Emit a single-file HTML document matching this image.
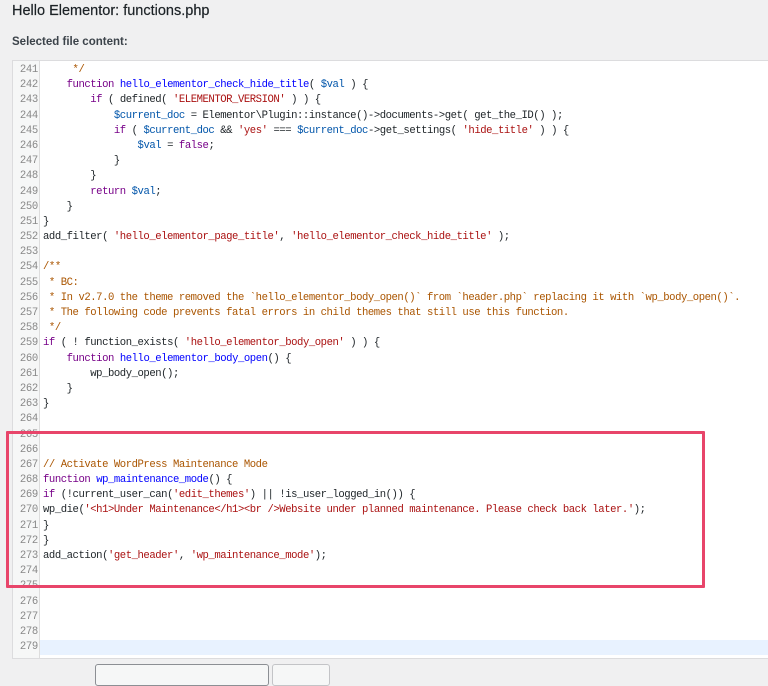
<!DOCTYPE html>
<html><head><meta charset="utf-8"><style>
body{margin:0;width:768px;height:670px;background:#f0f0f1;overflow:hidden;font-family:"Liberation Sans",sans-serif;color:#1d2327;position:relative}
h1{position:absolute;left:12px;top:3px;margin:0;font-size:14.5px;font-weight:normal;color:#1d2327;-webkit-text-stroke:0.2px #1d2327}
.lab{position:absolute;left:12px;top:36px;font-size:11.5px;font-weight:bold;color:#3c434a}
.ed{position:absolute;left:12px;top:60px;width:760px;height:597px;background:#fff;border:1px solid #dcdcde;overflow:hidden}
.gut{position:absolute;left:0;top:0;width:26px;height:100%;background:#f6f7f7;border-right:1px solid #ddd}
.lines{position:absolute;left:0;top:2px;width:760px;font-family:"Liberation Mono",monospace;font-size:10.6px;letter-spacing:-0.45px;line-height:15.2px}
.l{height:15.2px;white-space:pre;position:relative}
.n{display:inline-block;width:25px;text-align:right;color:#888;margin-right:5px;letter-spacing:-0.3px}
.act{background:#e8f2ff}
.k{color:#708}.d{color:#00f}.v{color:#05a}.s{color:#a11}.c{color:#a50}.t{color:#000}
.red{position:absolute;left:6px;top:431px;width:693px;height:151px;border:3.5px solid #e8456a;border-radius:1px}
.btn1{position:absolute;left:95px;top:664px;width:172px;height:20px;border:1px solid #8c8f94;background:#f6f7f7;border-radius:3px}
.btn2{position:absolute;left:272px;top:664px;width:56px;height:20px;border:1px solid #c3c4c7;background:#f6f7f7;border-radius:3px}
</style></head><body>
<h1>Hello Elementor: functions.php</h1>
<div class="lab">Selected file content:</div>
<div class="ed"><div class="gut"></div>
<div class="lines">
<div class="l"><span class="n">241</span><span class="c">     */</span></div>
<div class="l"><span class="n">242</span>    <span class="k">function</span> <span class="d">hello_elementor_check_hide_title</span>( <span class="v">$val</span> ) {</div>
<div class="l"><span class="n">243</span>        <span class="k">if</span> ( defined( <span class="s">'ELEMENTOR_VERSION'</span> ) ) {</div>
<div class="l"><span class="n">244</span>            <span class="v">$current_doc</span> = Elementor\Plugin::instance()-&gt;documents-&gt;get( get_the_ID() );</div>
<div class="l"><span class="n">245</span>            <span class="k">if</span> ( <span class="v">$current_doc</span> &amp;&amp; <span class="s">'yes'</span> === <span class="v">$current_doc</span>-&gt;get_settings( <span class="s">'hide_title'</span> ) ) {</div>
<div class="l"><span class="n">246</span>                <span class="v">$val</span> = <span class="k">false</span>;</div>
<div class="l"><span class="n">247</span>            }</div>
<div class="l"><span class="n">248</span>        }</div>
<div class="l"><span class="n">249</span>        <span class="k">return</span> <span class="v">$val</span>;</div>
<div class="l"><span class="n">250</span>    }</div>
<div class="l"><span class="n">251</span>}</div>
<div class="l"><span class="n">252</span>add_filter( <span class="s">'hello_elementor_page_title'</span>, <span class="s">'hello_elementor_check_hide_title'</span> );</div>
<div class="l"><span class="n">253</span></div>
<div class="l"><span class="n">254</span><span class="c">/**</span></div>
<div class="l"><span class="n">255</span><span class="c"> * BC:</span></div>
<div class="l"><span class="n">256</span><span class="c"> * In v2.7.0 the theme removed the `hello_elementor_body_open()` from `header.php` replacing it with `wp_body_open()`.</span></div>
<div class="l"><span class="n">257</span><span class="c"> * The following code prevents fatal errors in child themes that still use this function.</span></div>
<div class="l"><span class="n">258</span><span class="c"> */</span></div>
<div class="l"><span class="n">259</span><span class="k">if</span> ( ! function_exists( <span class="s">'hello_elementor_body_open'</span> ) ) {</div>
<div class="l"><span class="n">260</span>    <span class="k">function</span> <span class="d">hello_elementor_body_open</span>() {</div>
<div class="l"><span class="n">261</span>        wp_body_open();</div>
<div class="l"><span class="n">262</span>    }</div>
<div class="l"><span class="n">263</span>}</div>
<div class="l"><span class="n">264</span></div>
<div class="l"><span class="n">265</span></div>
<div class="l"><span class="n">266</span></div>
<div class="l"><span class="n">267</span><span class="c">// Activate WordPress Maintenance Mode</span></div>
<div class="l"><span class="n">268</span><span class="k">function</span> <span class="d">wp_maintenance_mode</span>() {</div>
<div class="l"><span class="n">269</span><span class="k">if</span> (!current_user_can(<span class="s">'edit_themes'</span>) || !is_user_logged_in()) {</div>
<div class="l"><span class="n">270</span>wp_die(<span class="s">'&lt;h1&gt;Under Maintenance&lt;/h1&gt;&lt;br /&gt;Website under planned maintenance. Please check back later.'</span>);</div>
<div class="l"><span class="n">271</span>}</div>
<div class="l"><span class="n">272</span>}</div>
<div class="l"><span class="n">273</span>add_action(<span class="s">'get_header'</span>, <span class="s">'wp_maintenance_mode'</span>);</div>
<div class="l"><span class="n">274</span></div>
<div class="l"><span class="n">275</span></div>
<div class="l"><span class="n">276</span></div>
<div class="l"><span class="n">277</span></div>
<div class="l"><span class="n">278</span></div>
<div class="l act" style="background:linear-gradient(to right,#f6f7f7 26px,#ddd 26px,#ddd 27px,#e8f2ff 27px)"><span class="n">279</span></div>
</div></div>
<div class="red"></div>
<div class="btn1"></div><div class="btn2"></div>
</body></html>
